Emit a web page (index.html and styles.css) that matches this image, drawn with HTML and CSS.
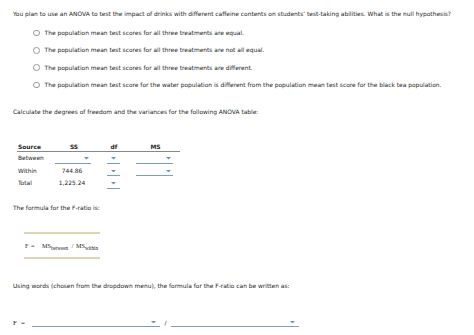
FILE: index.html
```html
<!DOCTYPE html>
<html>
<head>
<meta charset="utf-8">
<link rel="stylesheet" href="styles.css">
</head>
<body>
<div class="page">
  <p class="question">You plan to use an ANOVA to test the impact of drinks with different caffeine contents on students’ test-taking abilities. What is the null hypothesis?</p>
  <div class="options">
    <div class="option"><span class="radio"></span><span>The population mean test scores for all three treatments are equal.</span></div>
    <div class="option"><span class="radio"></span><span>The population mean test scores for all three treatments are not all equal.</span></div>
    <div class="option"><span class="radio"></span><span>The population mean test scores for all three treatments are different.</span></div>
    <div class="option"><span class="radio"></span><span>The population mean test score for the water population is different from the population mean test score for the black tea population.</span></div>
  </div>
  <p class="calc">Calculate the degrees of freedom and the variances for the following ANOVA table:</p>
  <div class="anova">
    <div class="row head">
      <div class="c src">Source</div>
      <div class="c ss">SS</div>
      <div class="c df">df</div>
      <div class="c ms">MS</div>
    </div>
    <div class="row">
      <div class="c src">Between</div>
      <div class="c ss"><span class="dd dd-ss"><svg class="arr" viewBox="0 0 6 3"><polygon points="0,0 6,0 3,3"/></svg></span></div>
      <div class="c df"><span class="dd dd-df"><svg class="arr" viewBox="0 0 6 3"><polygon points="0,0 6,0 3,3"/></svg></span></div>
      <div class="c ms"><span class="dd dd-ms"><svg class="arr" viewBox="0 0 6 3"><polygon points="0,0 6,0 3,3"/></svg></span></div>
    </div>
    <div class="row">
      <div class="c src">Within</div>
      <div class="c ss"><span class="num">744.86</span></div>
      <div class="c df"><span class="dd dd-df"><svg class="arr" viewBox="0 0 6 3"><polygon points="0,0 6,0 3,3"/></svg></span></div>
      <div class="c ms"><span class="dd dd-ms"><svg class="arr" viewBox="0 0 6 3"><polygon points="0,0 6,0 3,3"/></svg></span></div>
    </div>
    <div class="row">
      <div class="c src">Total</div>
      <div class="c ss"><span class="num">1,225.24</span></div>
      <div class="c df"><span class="dd dd-df"><svg class="arr" viewBox="0 0 6 3"><polygon points="0,0 6,0 3,3"/></svg></span></div>
      <div class="c ms"></div>
    </div>
  </div>
  <p class="formula-label">The formula for the F-ratio is:</p>
  <div class="formula"><span class="ff">F</span><span class="feq">=</span><span>MS<sub>between</sub></span><span class="fsl">/</span><span>MS<sub>within</sub></span></div>
  <p class="words">Using words (chosen from the dropdown menu), the formula for the F-ratio can be written as:</p>
  <div class="frow">
    <span class="fl">F</span><span class="eq">=</span>
    <span class="dd dd-wide"><svg class="arr" viewBox="0 0 6 3"><polygon points="0,0 6,0 3,3"/></svg></span>
    <span class="slash">/</span>
    <span class="dd dd-wide"><svg class="arr" viewBox="0 0 6 3"><polygon points="0,0 6,0 3,3"/></svg></span>
  </div>
</div>
</body>
</html>
```
FILE: styles.css
```css
html, body {
  margin: 0;
  padding: 0;
  background: #ffffff;
}
.page {
  font-family: "DejaVu Sans", Verdana, sans-serif;
  font-size: 5.92px;
  color: #262626;
  padding: 10px 0 0 13px;
  width: 461px;
  height: 325px;
}
p { margin: 0; }
.question {
  line-height: 8px;
  height: 8px;
  white-space: nowrap;
}
.options {
  margin: 11px 0 0 20px;
}
.option {
  display: flex;
  align-items: center;
  height: 8px;
  line-height: 8px;
  margin-bottom: 9.4px;
  white-space: nowrap;
}
.radio {
  width: 4.6px;
  height: 4.6px;
  border: 0.7px solid #9a9a9a;
  border-radius: 50%;
  margin-right: 5px;
  background: #fff;
  flex: none;
}
.calc {
  margin-top: 19px;
  line-height: 8px;
  height: 8px;
}
.anova {
  margin: 27px 0 0 4px;
  width: 163px;
}
.row {
  display: flex;
  height: 12.5px;
  align-items: center;
}
.row.head {
  height: 8px;
  font-weight: bold;
  border-bottom: 1px solid #888;
}
.c { flex: none; }
.src { width: 33px; padding-left: 1px; }
.ss { width: 46px; }
.df { width: 34px; }
.ms { width: 49px; }
.head .ss, .head .df, .head .ms { text-align: center; }
.num {
  display: block;
  text-align: center;
  padding-right: 4px;
}
.dd {
  display: block;
  position: relative;
  height: 7px;
  border-bottom: 1px solid #7d9cc4;
  margin-top: 3px;
}
.dd-ss { width: 36px; margin-left: 4px; }
.dd-df { width: 13px; margin-left: 10px; }
.dd-ms { width: 37px; margin-left: 5px; }
.arr {
  position: absolute;
  right: 2px;
  top: 1.5px;
  width: 5px;
  height: 2.5px;
  fill: #6f8fbd;
  display: block;
}
.dd-df .arr { right: 4px; }
.formula-label {
  margin-top: 14px;
  line-height: 8px;
  height: 8px;
}
.formula {
  margin: 20px 0 0 11px;
  width: 76px;
  height: 23px;
  border-top: 2px solid #ddd5b4;
  border-bottom: 2px solid #ddd5b4;
  font-family: "Liberation Serif", "Times New Roman", serif;
  font-size: 6.2px;
  line-height: 23px;
  color: #262626;
  display: flex;
  align-items: center;
  white-space: nowrap;
}
.ff { margin-left: 1px; }
.feq { margin: 0 7.5px 0 2.5px; }
.fsl { margin: 0 2.5px 0 3.5px; }
.formula sub {
  font-size: 5.2px;
  vertical-align: -1.5px;
  line-height: 0;
}
.words {
  margin-top: 23.5px;
  line-height: 8px;
  height: 8px;
}
.frow {
  margin-top: 28px;
  display: flex;
  align-items: flex-end;
  height: 9px;
  font-family: "Liberation Serif", serif;
  font-size: 7px;
}
.fl { width: 8px; line-height: 8px; }
.eq { width: 11px; line-height: 8px; }
.frow .dd {
  margin-top: 0;
  height: 7px;
}
.dd-wide { width: 128px; }
.frow .dd .arr { right: 4px; }
.slash {
  width: 11px;
  text-align: center;
  font-family: "DejaVu Sans", sans-serif;
  font-size: 5.92px;
  line-height: 8px;
}
```
